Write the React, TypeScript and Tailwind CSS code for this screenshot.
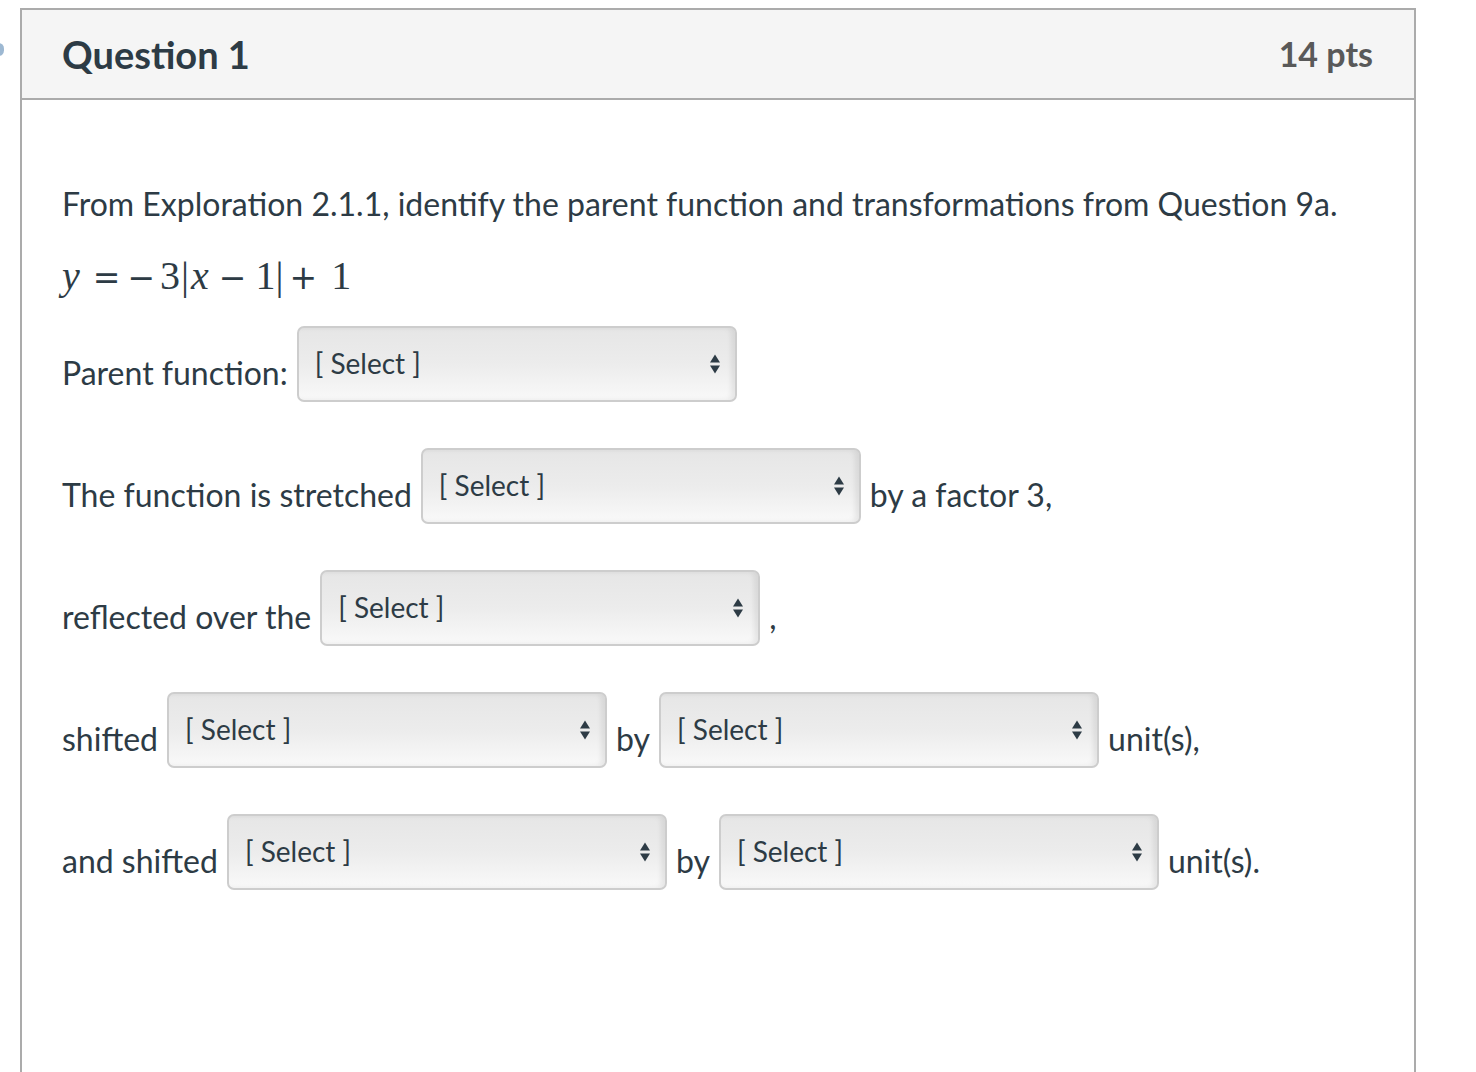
import React from "react";

function Arrows() {
  return (
    <svg width="12" height="24" viewBox="0 0 12 24" className="shrink-0">
      <polygon points="6,2.5 11,10.5 1,10.5" fill="#2d3b45" />
      <polygon points="1,13.5 11,13.5 6,21.5" fill="#2d3b45" />
    </svg>
  );
}

function Select() {
  return (
    <div className="w-[440px] h-[76px] shrink-0 rounded-[7px] border-2 border-[#cdcdcd] bg-gradient-to-b from-[#e6e6e6] via-[#ececec] to-[#f9f9f9] shadow-[inset_-4px_0_5px_rgba(0,0,0,0.07)] flex items-start justify-between pl-4 pr-[14px]">
      <span className="text-[28px] leading-[32px] mt-[19px] text-[#2d3b45]">[ Select ]</span>
      <div className="mt-[24px]">
        <Arrows />
      </div>
    </div>
  );
}

function Label({ children }: { children: React.ReactNode }) {
  return (
    <span className="text-[32px] leading-[40px] mt-[27px] text-[#2d3b45] whitespace-nowrap">
      {children}
    </span>
  );
}

function Op({ children, className }: { children: React.ReactNode; className: string }) {
  return (
    <span
      className={"text-[33px] " + className}
      style={{ fontFamily: "'DejaVu Sans', sans-serif" }}
    >
      {children}
    </span>
  );
}

export default function App() {
  return (
    <div
      className="relative min-h-screen bg-white overflow-hidden"
      style={{ fontFamily: "Lato, 'Open Sans', sans-serif" }}
    >
      <div className="absolute left-[-7px] top-[43px] w-[11px] h-[13px] rounded-full bg-[#9db8d2]" />
      <div className="pt-2 pl-5">
        <div className="w-[1396px] h-[1100px] border-2 border-b-0 border-[#ababab]">
          <div className="h-[90px] bg-[#f5f5f5] border-b-2 border-[#ababab] flex items-center justify-between pl-10 pr-[41px]">
            <h2 className="text-[38px] font-bold text-[#2d3b45] leading-none">Question 1</h2>
            <span className="text-[34px] font-bold text-[#595959] leading-none">14 pts</span>
          </div>
          <div className="pl-10 pt-[84px]">
            <p className="text-[32px] leading-[40px] text-[#2d3b45] whitespace-nowrap">
              From Exploration 2.1.1, identify the parent function and transformations from Question 9a.
            </p>
            <div
              className="mt-[30px] text-[40px] leading-[44px] text-[#2d3b45] flex items-baseline whitespace-pre"
              style={{ fontFamily: "'Liberation Serif', 'DejaVu Serif', serif" }}
            >
              <i>y</i>
              <Op className="ml-[13px]">=</Op>
              <Op className="ml-[7px]">−</Op>
              <span className="ml-[5px]">3</span>
              <span className="ml-[1px]">|</span>
              <i className="ml-[2px]">x</i>
              <Op className="ml-[10px]">−</Op>
              <span className="ml-[9px]">1</span>
              <span>|</span>
              <Op className="ml-[6px]">+</Op>
              <span className="ml-[14px]">1</span>
            </div>

            <div className="mt-[26px] flex items-start gap-[9px]">
              <Label>Parent function:</Label>
              <Select />
            </div>

            <div className="mt-[46px] flex items-start gap-[9px]">
              <Label>The function is stretched</Label>
              <Select />
              <Label>by a factor 3,</Label>
            </div>

            <div className="mt-[46px] flex items-start gap-[9px]">
              <Label>reflected over the</Label>
              <Select />
              <Label>,</Label>
            </div>

            <div className="mt-[46px] flex items-start gap-[9px]">
              <Label>shifted</Label>
              <Select />
              <Label>by</Label>
              <Select />
              <Label>unit(s),</Label>
            </div>

            <div className="mt-[46px] flex items-start gap-[9px]">
              <Label>and shifted</Label>
              <Select />
              <Label>by</Label>
              <Select />
              <Label>unit(s).</Label>
            </div>
          </div>
        </div>
      </div>
    </div>
  );
}
